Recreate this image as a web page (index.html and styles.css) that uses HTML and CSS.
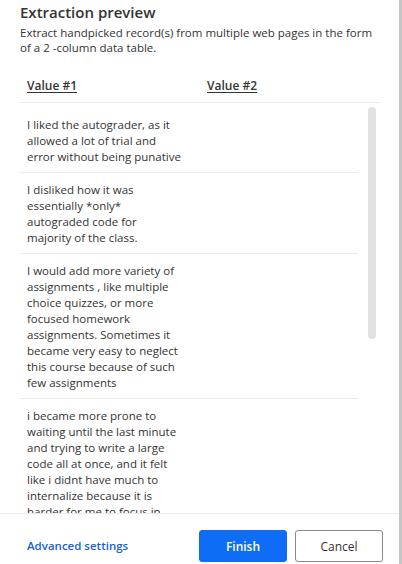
FILE: index.html
```html
<!DOCTYPE html>
<html>
<head>
<meta charset="utf-8">
<link rel="stylesheet" href="styles.css">
</head>
<body>
<div class="panel">
  <header class="head">
    <h1 class="title">Extraction preview</h1>
    <p class="desc">Extract handpicked record(s) from multiple web pages in the form<br>of a 2 -column data table.</p>
  </header>
  <section class="table">
    <div class="thead">
      <span class="th">Value #1</span>
      <span class="th">Value #2</span>
    </div>
    <div class="tbody">
      <div class="rows">
        <div class="row"><div class="cell">I liked the autograder, as it<br>allowed a lot of trial and<br>error without being punative</div><div class="cell"></div></div>
        <div class="row"><div class="cell">I disliked how it was<br>essentially *only*<br>autograded code for<br>majority of the class.</div><div class="cell"></div></div>
        <div class="row"><div class="cell">I would add more variety of<br>assignments , like multiple<br>choice quizzes, or more<br>focused homework<br>assignments. Sometimes it<br>became very easy to neglect<br>this course because of such<br>few assignments</div><div class="cell"></div></div>
        <div class="row"><div class="cell">i became more prone to<br>waiting until the last minute<br>and trying to write a large<br>code all at once, and it felt<br>like i didnt have much to<br>internalize because it is<br>harder for me to focus in</div><div class="cell"></div></div>
      </div>
      <div class="scrollbar"></div>
    </div>
  </section>
  <footer class="foot">
    <a class="link" href="#">Advanced settings</a>
    <div class="actions">
      <button class="btn primary">Finish</button>
      <button class="btn secondary">Cancel</button>
    </div>
  </footer>
</div>
</body>
</html>
```
FILE: styles.css
```css
* { box-sizing: border-box; }
html, body { margin: 0; padding: 0; background: #fff; }
body {
  font-family: "Open Sans", "Noto Sans", sans-serif;
  color: #333;
  width: 402px;
  height: 564px;
  overflow: hidden;
}
.panel {
  width: 402px;
  height: 564px;
  border-right: 3px solid #c6c6c6;
  display: flex;
  flex-direction: column;
}
.head { padding: 1px 20px 0 20px; }
.title {
  margin: 0;
  font-size: 15px;
  line-height: 22px;
  font-weight: 600;
  color: #333;
}
.desc {
  margin: 2px 0 0 0;
  font-size: 11.5px;
  line-height: 15px;
  color: #333;
  white-space: nowrap;
}
.table {
  flex: 1;
  display: flex;
  flex-direction: column;
  margin-top: 23px;
  min-height: 0;
}
.thead {
  margin: 0 19px 0 20px;
  display: grid;
  grid-template-columns: 180px 180px;
  padding-bottom: 8px;
  border-bottom: 1px solid #ececec;
}
.th {
  padding-left: 7px;
  font-size: 12px;
  line-height: 16px;
  font-weight: 600;
  text-decoration: underline;
  text-underline-offset: 2px;
}
.tbody {
  position: relative;
  flex: 1;
  min-height: 0;
  overflow: hidden;
  padding: 5px 0 0 20px;
}
.rows { width: 338px; }
.row {
  display: grid;
  grid-template-columns: 180px 1fr;
  padding: 9px 0 7px 0;
  border-bottom: 1px solid #ececec;
}
.cell {
  padding-left: 7px;
  font-size: 11.5px;
  line-height: 16px;
  white-space: nowrap;
  color: #333;
}
.scrollbar {
  position: absolute;
  left: 368px;
  top: 4px;
  width: 8px;
  height: 232px;
  border-radius: 4px;
  background: #e1e1e1;
}
.foot {
  height: 51px;
  border-top: 1px solid #ebebeb;
  display: flex;
  align-items: flex-start;
  justify-content: space-between;
  padding: 16px 16px 0 27px;
}
.link {
  margin-top: 8px;
  font-size: 11.5px;
  line-height: 16px;
  font-weight: 600;
  color: #1a5fd4;
  text-decoration: none;
}
.actions { display: flex; gap: 8px; }
.btn {
  width: 88px;
  height: 32px;
  border-radius: 3px;
  font-family: "Open Sans", "Noto Sans", sans-serif;
  font-size: 12px;
  padding: 0;
  cursor: pointer;
}
.primary {
  background: #0f6cf4;
  border: 1px solid #0f6cf4;
  color: #fff;
  font-weight: 600;
}
.secondary {
  background: #fff;
  border: 1px solid #8a8a8a;
  color: #333;
}
```
